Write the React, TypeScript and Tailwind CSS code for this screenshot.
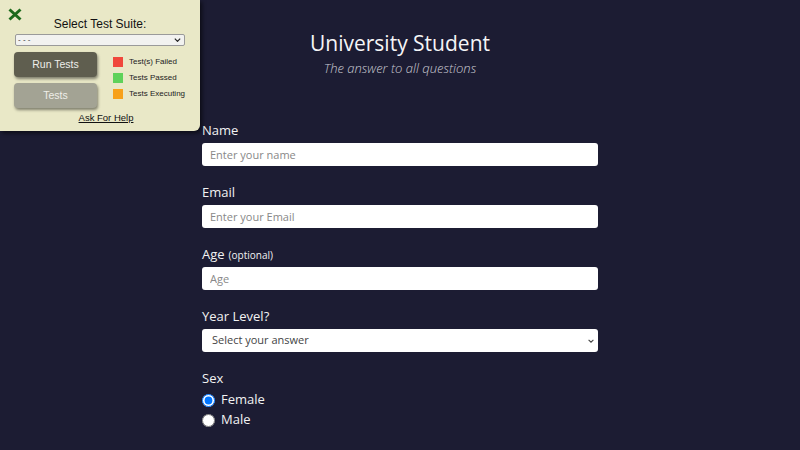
import React from 'react';

const Chevron: React.FC<{ className?: string }> = ({ className }) => (
  <svg viewBox="0 0 10 6" className={className} fill="none" stroke="currentColor" strokeWidth="1.8">
    <path d="M1 1l4 4 4-4" />
  </svg>
);

const TestPanel: React.FC = () => {
  const legend = [
    { color: 'bg-[#f0483c]', label: 'Test(s) Failed' },
    { color: 'bg-[#5fd25a]', label: 'Tests Passed' },
    { color: 'bg-[#f7a11a]', label: 'Tests Executing' }
  ];

  return (
    <div className="absolute left-0 top-0 z-10 w-[200px] h-[131px] bg-[#e9e8c7] rounded-br-md shadow-[2px_2px_4px_rgba(0,0,0,0.6)] font-['Liberation_Sans',Arial,sans-serif]">
      <svg viewBox="0 0 14 13" className="absolute left-[8px] top-[8px] w-[14px] h-[13px] text-[#1b6a1b]" fill="none" stroke="currentColor" strokeWidth="3">
        <path d="M1.5 1.5l11 10M12.5 1.5l-11 10" />
      </svg>
      <div className="pt-[17px] text-center text-[12px] leading-[14px] text-[#111]">Select Test Suite:</div>
      <div className="relative mx-[15px] mt-[3px] h-[12px]">
        <select className="block appearance-none w-full h-[12px] bg-[#f2f2f0] border border-[#9a9a9a] rounded-[2px] text-[8px] leading-[10px] pl-[2px] py-0 text-[#333] outline-none">
          <option>- - -</option>
        </select>
        <Chevron className="absolute right-[4px] top-[4px] w-[7px] h-[4px] text-[#222] pointer-events-none" />
      </div>
      <div className="flex mt-[6px] pl-[14px]">
        <div className="flex flex-col gap-[6px]">
          <button className="w-[83px] h-[25px] rounded-[4px] bg-[#5f5e4f] text-[#eeeeea] text-[10.5px] shadow-[1px_2px_3px_rgba(0,0,0,0.45)]">Run Tests</button>
          <button className="w-[83px] h-[25px] rounded-[4px] bg-[#a3a394] text-[#eeeee8] text-[10.5px] shadow-[1px_2px_3px_rgba(0,0,0,0.45)]">Tests</button>
        </div>
        <div className="flex flex-col gap-[6px] ml-[16px] mt-[5px]">
          {legend.map(item => (
            <div key={item.label} className="flex items-center h-[10px]">
              <span className={`w-[10px] h-[10px] ${item.color}`} />
              <span className="ml-[6px] text-[8px] leading-[10px] text-[#222]">{item.label}</span>
            </div>
          ))}
        </div>
      </div>
      <div className="mt-[4px] pl-[12px] text-center text-[9.5px] leading-[12px] text-[#111] underline">Ask For Help</div>
    </div>
  );
};

const Field: React.FC<{ label: string; hint?: string; placeholder: string }> = ({ label, hint, placeholder }) => (
  <div className="mb-[17px]">
    <div className="h-[18px] text-[13px] leading-[18px] text-[#f2f2f2]">
      {label}
      {hint && <span className="ml-[4px] text-[10px] leading-none">{hint}</span>}
    </div>
    <input
      className="block mt-[4px] w-full h-[23px] rounded-[3px] bg-white px-[8px] text-[11px] text-[#333] placeholder:text-[#888] outline-none"
      placeholder={placeholder}
    />
  </div>
);

export default function App() {
  return (
    <div className="relative min-h-screen w-full bg-[#1c1c33] font-['Open_Sans',sans-serif]">
      <TestPanel />
      <div className="w-[396px] mx-auto pt-[30px]">
        <h1 className="text-center text-[21px] leading-[26px] text-[#f5f5f7]">University Student</h1>
        <p className="mt-[4px] text-center text-[13px] leading-[16px] italic font-light text-[#c9c9d2]">The answer to all questions</p>
        <form className="mt-[45px]">
          <Field label="Name" placeholder="Enter your name" />
          <Field label="Email" placeholder="Enter your Email" />
          <Field label="Age" hint="(optional)" placeholder="Age" />
          <div className="mb-[17px]">
            <div className="text-[13px] leading-[18px] text-[#f2f2f2]">Year Level?</div>
            <div className="relative mt-[4px] h-[23px]">
              <select className="block appearance-none w-full h-[23px] rounded-[3px] bg-white pl-[10px] py-0 text-[11px] text-[#444] outline-none">
                <option>Select your answer</option>
              </select>
              <Chevron className="absolute right-[4px] top-[10px] w-[6px] h-[4px] text-[#444] pointer-events-none" />
            </div>
          </div>
          <div className="text-[13px] leading-[18px] text-[#f2f2f2]">Sex</div>
          <div className="mt-[3px] flex flex-col">
            <label className="flex items-center h-[20px] text-[13px] text-[#f2f2f2]">
              <input type="radio" name="sex" defaultChecked className="w-[13px] h-[13px] m-0" />
              <span className="ml-[6px]">Female</span>
            </label>
            <label className="flex items-center h-[20px] text-[13px] text-[#f2f2f2]">
              <input type="radio" name="sex" className="w-[13px] h-[13px] m-0" />
              <span className="ml-[6px]">Male</span>
            </label>
          </div>
        </form>
      </div>
    </div>
  );
}
